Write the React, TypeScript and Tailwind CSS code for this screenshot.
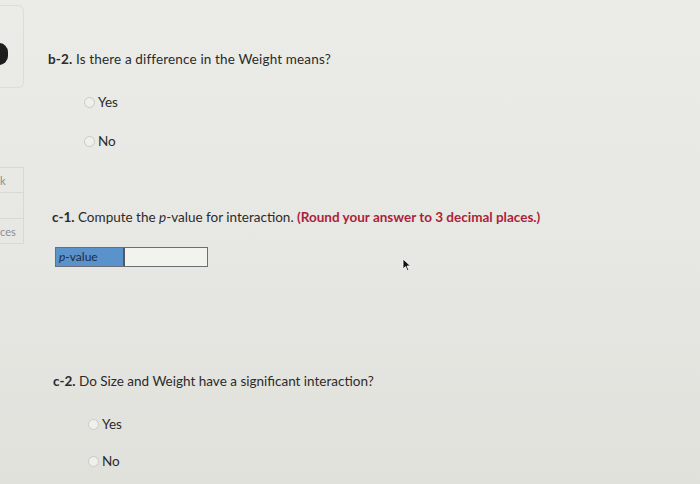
import React from "react";

function Radio({ label }: { label: string }) {
  return (
    <label className="flex items-center gap-[3px] text-[13.5px] leading-[18px] text-[#2b2b2b]">
      <span className="w-[11px] h-[11px] rounded-full border border-[#c9c9c6] bg-[#efefec] shrink-0" />
      <span>{label}</span>
    </label>
  );
}

export default function App() {
  return (
    <div
      className="w-[700px] h-[484px] overflow-hidden flex bg-gradient-to-b from-[#ebebe8] via-[#e7e7e3] to-[#e1e1dc]"
      style={{ fontFamily: 'Lato, "Open Sans", "Liberation Sans", sans-serif' }}
    >
      {/* side rail */}
      <div className="w-[24px] shrink-0 flex flex-col text-[11px] text-[#8a8f96]">
        <div className="mt-[5px] h-[83px] border border-l-0 border-[#dcdcd8] rounded-r-md flex items-center">
          <span className="w-[18px] h-[22px] -ml-[10px] mt-[14px] rounded-full bg-[#1d1d1d]" />
        </div>
        <div className="mt-[79px] h-[26px] border border-l-0 border-[#d8d8d4] flex items-center leading-none">
          k
        </div>
        <div className="h-[26px] border border-l-0 border-t-0 border-[#d8d8d4]" />
        <div className="h-[25px] border border-l-0 border-t-0 border-[#d8d8d4] flex items-center leading-none">
          ces
        </div>
      </div>

      {/* questions */}
      <div className="flex-1 flex flex-col">
        <p className="mt-[50px] ml-[24px] text-[13.5px] tracking-[0.15px] text-[#2b2b2b] leading-[18px]">
          <span className="font-bold">b-2.</span> Is there a difference in the Weight means?
        </p>
        <div className="ml-[60px] mt-[25px] flex flex-col gap-[21px]">
          <Radio label="Yes" />
          <Radio label="No" />
        </div>

        <p className="mt-[58px] ml-[28px] text-[13.5px] text-[#2b2b2b] leading-[18px]">
          <span className="font-bold">c-1.</span> Compute the <i>p</i>-value for interaction.{" "}
          <span className="font-bold text-[#ad1f3b]">(Round your answer to 3 decimal places.)</span>
        </p>
        <div className="mt-[21px] ml-[31px] h-[20px] flex items-start">
          <div className="flex h-[20px] border border-[#6a6f75]">
            <div className="w-[67px] bg-[#5a92cc] text-[12px] text-[#1c2c44] flex items-center pl-[3px]">
              <i>p</i>-value
            </div>
            <div className="w-[84px] bg-[#f2f2ef] border-l-2 border-[#55595e]" />
          </div>
          <svg className="ml-[194px] mt-[11px] shrink-0" width="10" height="14" viewBox="0 0 10 14">
            <path d="M1 1 L1 11 L3.5 8.6 L5.3 12.6 L6.8 11.9 L5 8 L8.5 8 Z" fill="#111" stroke="#fff" strokeWidth="0.8" />
          </svg>
        </div>

        <p className="mt-[105px] ml-[29px] text-[13.5px] text-[#2b2b2b] leading-[18px]">
          <span className="font-bold">c-2.</span> Do Size and Weight have a significant interaction?
        </p>
        <div className="ml-[64px] mt-[25px] flex flex-col gap-[19px]">
          <Radio label="Yes" />
          <Radio label="No" />
        </div>
      </div>
    </div>
  );
}
